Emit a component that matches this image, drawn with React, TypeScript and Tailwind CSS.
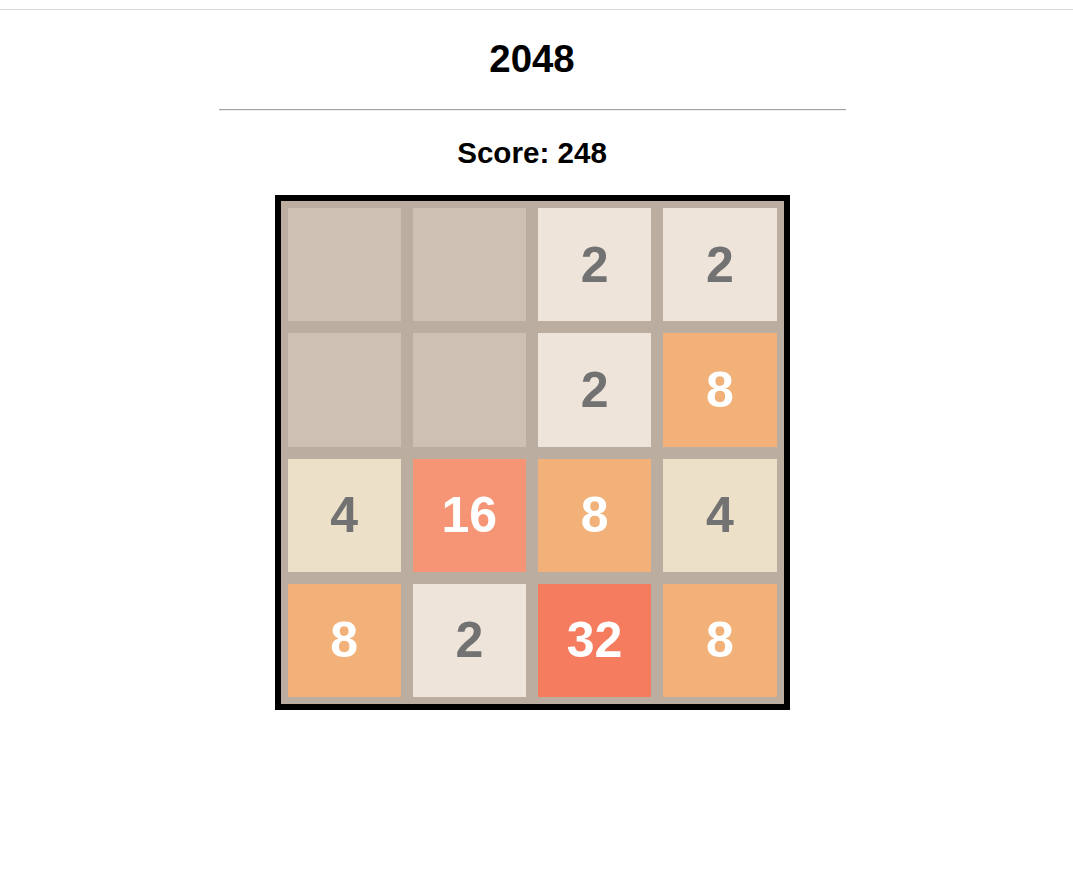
import React from 'react'

type Cell = number | null

const board: Cell[][] = [
  [null, null, 2, 2],
  [null, null, 2, 8],
  [4, 16, 8, 4],
  [8, 2, 32, 8],
]

// tile colours keyed by value
const tileStyles: Record<string, string> = {
  empty: 'bg-[#cdc1b4]',
  '2': 'bg-[#eee4da] text-[#727272]',
  '4': 'bg-[#ede0c8] text-[#727272]',
  '8': 'bg-[#f2b179] text-white',
  '16': 'bg-[#f59575] text-white',
  '32': 'bg-[#f67c5f] text-white',
}

function Tile({ value }: { value: Cell }) {
  const cls = value === null ? tileStyles.empty : tileStyles[String(value)]
  return (
    <div className={`flex items-center justify-center text-[50px] font-bold leading-none ${cls}`}>
      {value}
    </div>
  )
}

export default function App() {
  const score = 248

  return (
    <div className="min-h-screen bg-white font-['Liberation_Sans',Arial,sans-serif] text-black">
      <div className="pt-[9px]">
        <div className="h-px bg-[#dadada]" />
      </div>

      <div className="flex flex-col items-center pr-[9px]">
        <h1 className="mt-[27px] text-[38.4px] font-bold leading-[44px]">2048</h1>

        <div className="mt-[28px] w-[627px] border-t border-b border-t-[#a3a3a3] border-b-[#ededed]" />

        <h2 className="mt-[25px] text-[29.6px] font-bold leading-[33px]">Score: {score}</h2>

        <div className="mt-[26px] w-[515px] h-[515px] border-[6px] border-black bg-[#bbada0] p-[7px]">
          <div className="grid h-full grid-cols-4 grid-rows-4 gap-[12px]">
            {board.flat().map((value, i) => (
              <Tile key={i} value={value} />
            ))}
          </div>
        </div>
      </div>
    </div>
  )
}
